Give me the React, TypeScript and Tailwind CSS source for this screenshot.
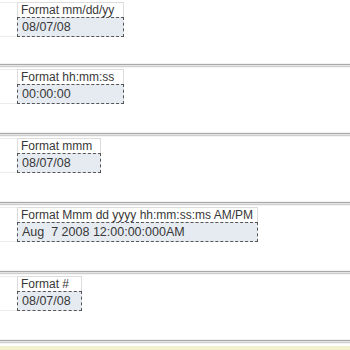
const sections = [
  { label: "Format mm/dd/yy", value: "08/07/08", width: "w-[107px]" },
  { label: "Format hh:mm:ss", value: "00:00:00", width: "w-[107px]" },
  { label: "Format mmm", value: "08/07/08", width: "w-[84px]" },
  { label: "Format Mmm dd yyyy hh:mm:ss:ms AM/PM", value: "Aug  7 2008 12:00:00:000AM", width: "w-[241px]" },
  { label: "Format #", value: "08/07/08", width: "w-[65px]" },
];

const Separator = () => (
  <div className="flex flex-col">
    <div className="h-px bg-[#f2f2f2]" />
    <div className="h-px bg-[#a9a9a9]" />
    <div className="h-px bg-[#e4e4e4]" />
    <div className="h-px bg-[#cfcfcf]" />
    <div className="h-px bg-[#f4f4f4]" />
  </div>
);

const Field = ({ label, value, width }: { label: string; value: string; width: string }) => (
  <div className="flex">
    <div className="w-[17px] flex flex-col">
      <div className="h-[15px] border-t border-[#ececec]" />
      <div className="h-[20px] border-b border-[#ececec]" />
    </div>
    <div className={`${width} flex flex-col`}>
      <div className="h-[15px] border-t border-r border-l border-[#dcdcdc] pl-[3px] text-[12px] leading-[14px] text-[#383838] whitespace-pre">
        {label}
      </div>
      <div className="h-[20px] border border-dashed border-[#555] bg-[#e6ebf2] pl-[4px] text-[12.5px] leading-[18px] text-[#383838] whitespace-pre">
        {value}
      </div>
    </div>
  </div>
);

export default function App() {
  return (
    <div className="w-[350px] h-[350px] overflow-hidden bg-white font-['Liberation_Sans',Arial,sans-serif]">
      <div className="pt-[2px] h-[63px]">
        <Field {...sections[0]} />
      </div>
      {sections.slice(1).map((s) => (
        <div key={s.label}>
          <Separator />
          <div className="pt-[1px] h-[64px]">
            <Field {...s} />
          </div>
        </div>
      ))}
      <Separator />
      <div className="mt-[2px] h-[4px] bg-[#f3f2cf]" />
    </div>
  );
}
